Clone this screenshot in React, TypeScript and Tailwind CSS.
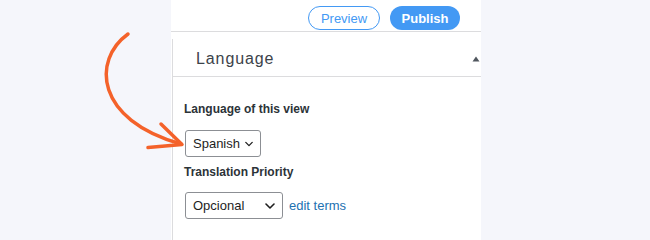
import React from 'react';

function Chevron({ w = 9 }: { w?: number }) {
    return (
        <svg width={w} height={6} viewBox="0 0 10 6" fill="none" className="shrink-0">
            <path d="M1 1l4 4 4-4" stroke="#1e1e1e" strokeWidth={1.6} strokeLinecap="round" strokeLinejoin="round" />
        </svg>
    );
}

function FakeSelect({ value, width, chevron }: { value: string; width: string; chevron: number }) {
    return (
        <div className={`${width} h-[27px] flex items-center justify-between pl-[7px] pr-[7px] border border-[#8c8f94] rounded-[3px] bg-white text-[13px] text-[#1e1e1e]`}>
            <span>{value}</span>
            <Chevron w={chevron} />
        </div>
    );
}

export default function App() {
    return (
        <div
            className="relative flex w-full h-[240px] bg-[#f5f6fb] overflow-hidden"
            style={{ fontFamily: '"Liberation Sans", Arial, sans-serif' }}
        >
            {/* Annotation arrow */}
            <svg className="absolute left-0 top-0 pointer-events-none z-10" width={650} height={240} viewBox="0 0 650 240" fill="none">
                <path d="M128 34 C 92 60, 95 120, 181 144" stroke="#f4622a" strokeWidth={3.5} strokeLinecap="round" />
                <path d="M161 124 L 182 144.5 L 148 147.5" stroke="#f4622a" strokeWidth={3.5} strokeLinecap="round" strokeLinejoin="round" />
            </svg>

            <div className="w-[171px] shrink-0" />

            <div className="w-[310px] shrink-0 bg-white flex flex-col">
                {/* Top bar */}
                <div className="h-[32px] flex justify-end items-start gap-[10px] pt-[6px] pr-[21px] border-b border-[#dcdcde]">
                    <button className="w-[72px] h-[24px] rounded-full border border-[#4399f4] text-[#4399f4] text-[13px] leading-none">
                        Preview
                    </button>
                    <button className="w-[70px] h-[24px] rounded-full bg-[#4399f4] text-white text-[13px] font-semibold leading-none">
                        Publish
                    </button>
                </div>

                <div className="h-[7px]" />

                {/* Language section */}
                <div className="flex-1 ml-px border-l border-[#dcdcde] flex flex-col">
                    <div className="h-[38px] flex items-center justify-between pl-[23px] pr-[1px] pt-[2px] border-b border-[#dcdcde]">
                        <span className="text-[16px] tracking-[0.9px] text-[#3c434a]">Language</span>
                        <svg width={8} height={6} viewBox="0 0 8 6">
                            <path d="M4 0.5L7.5 5.5H0.5Z" fill="#50575e" />
                        </svg>
                    </div>

                    <div className="flex flex-col items-start pl-[11px] pt-[24px]">
                        <div className="text-[12px] leading-[16px] font-bold text-[#2c3338]">Language of this view</div>
                        <div className="mt-[13px] ml-px">
                            <FakeSelect value="Spanish" width="w-[76px]" chevron={8} />
                        </div>
                        <div className="mt-[7px] text-[12px] leading-[16px] font-bold text-[#2c3338]">Translation Priority</div>
                        <div className="mt-[12px] ml-px flex items-center gap-[6px]">
                            <FakeSelect value="Opcional" width="w-[98px]" chevron={10} />
                            <a className="text-[13px] text-[#2271b1]">edit terms</a>
                        </div>
                    </div>
                </div>
            </div>

            <div className="flex-1" />
        </div>
    );
}
